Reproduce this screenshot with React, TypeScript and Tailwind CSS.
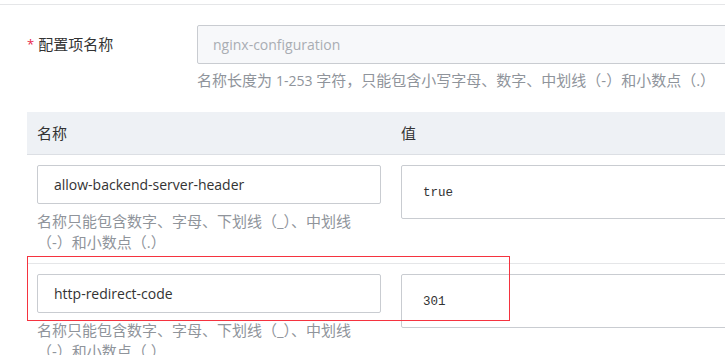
import React from "react";

const font = { fontFamily: '"Open Sans","Noto Sans CJK SC",sans-serif' };
const mono = { fontFamily: '"Liberation Mono","Noto Sans CJK SC",monospace' };

function Row({ name, value, highlight }: { name: string; value: string; highlight?: boolean }) {
  return (
    <div className="relative flex border-b border-[#e5e6e8]">
      {highlight && (
        <div className="absolute left-0 top-[-8px] w-[483px] h-[65px] border border-[#f5333f] pointer-events-none z-10" />
      )}
      <div className="w-[364px] shrink-0 px-[10px] pt-[10px] pb-[10px]">
        <div className="h-[39px] border border-[#c9ccd1] rounded-[2px] bg-white flex items-center pl-[16px] text-[14px] text-[#333]">
          {name}
        </div>
        <div className="mt-[7px] text-[15px] leading-[21px] text-[#8f949b] whitespace-nowrap">
          名称只能包含数字、字母、下划线（_）、中划线
          <br />
          （-）和小数点（.）
        </div>
      </div>
      <div className="flex-1 px-[10px] pt-[10px]">
        <div className="h-[54px] border border-[#c9ccd1] rounded-[2px] bg-white flex items-center pl-[21px] pt-[2px] text-[12.5px] text-[#333]" style={mono}>
          {value}
        </div>
      </div>
    </div>
  );
}

export default function App() {
  return (
    <div className="w-[725px] h-[355px] overflow-hidden bg-white relative" style={font}>
      <div className="h-[5px] border-b border-[#e5e6e8]" />
      <div className="flex pt-[20px] pl-[27px]">
        <div className="w-[170px] shrink-0 h-[39px] flex items-center text-[15px] text-[#333]">
          <span className="text-[#e8254b] mr-[4px] text-[13px]">*</span>
          配置项名称
        </div>
        <div className="flex-1">
          <div className="w-[560px] h-[39px] border border-[#c9ccd1] rounded-[2px] bg-[#f7f8fa] flex items-center pl-[15px] text-[14px] text-[#a9adb3]">
            nginx-configuration
          </div>
          <div className="mt-[6px] text-[15px] leading-[21px] text-[#8f949b] whitespace-nowrap">
            名称长度为 <span className="text-[14px]">1-253</span> 字符，只能包含小写字母、数字、中划线（-）和小数点（.）
          </div>
        </div>
      </div>
      <div className="ml-[27px] mt-[21px] w-[760px]">
        <div className="flex h-[43px] bg-[#eef1f5] border-b border-[#dcdfe4] items-center text-[15px] text-[#333]">
          <div className="w-[364px] shrink-0 pl-[10px] pt-[1px]">名称</div>
          <div className="flex-1 pl-[10px] pt-[1px]">值</div>
        </div>
        <Row name="allow-backend-server-header" value="true" />
        <Row name="http-redirect-code" value="301" highlight />
      </div>
    </div>
  );
}
